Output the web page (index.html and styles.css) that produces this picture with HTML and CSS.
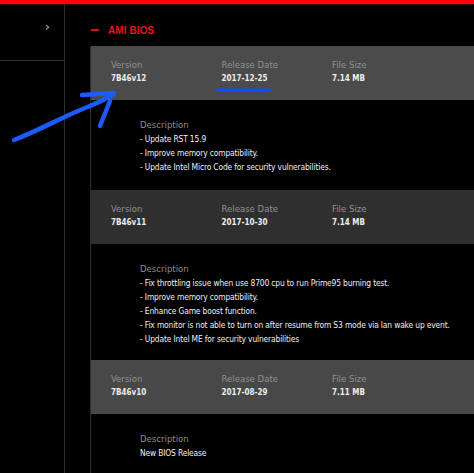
FILE: index.html
```html
<!DOCTYPE html>
<html>
<head>
<meta charset="utf-8">
<link rel="stylesheet" href="styles.css">
</head>
<body>
<div class="topbar"></div>
<div class="page">
  <aside class="sidebar">
    <div class="side-head"><span class="chev">&#8250;</span></div>
  </aside>
  <main class="content">
    <h2 class="section-title"><span class="dash"></span>AMI BIOS</h2>
    <div class="list">
      <div class="row row-light">
        <div class="cell"><div class="label">Version</div><div class="value">7B46v12</div></div>
        <div class="cell"><div class="label">Release Date</div><div class="value">2017-12-25</div></div>
        <div class="cell"><div class="label">File Size</div><div class="value">7.14 MB</div></div>
      </div>
      <div class="desc">
        <div class="desc-label">Description</div>
        <div class="desc-line">- Update RST 15.9</div>
        <div class="desc-line">- Improve memory compatibility.</div>
        <div class="desc-line">- Update Intel Micro Code for security vulnerabilities.</div>
      </div>
      <div class="row row-dark">
        <div class="cell"><div class="label">Version</div><div class="value">7B46v11</div></div>
        <div class="cell"><div class="label">Release Date</div><div class="value">2017-10-30</div></div>
        <div class="cell"><div class="label">File Size</div><div class="value">7.14 MB</div></div>
      </div>
      <div class="desc">
        <div class="desc-label">Description</div>
        <div class="desc-line">- Fix throttling issue when use 8700 cpu to run Prime95 burning test.</div>
        <div class="desc-line">- Improve memory compatibility.</div>
        <div class="desc-line">- Enhance Game boost function.</div>
        <div class="desc-line">- Fix monitor is not able to turn on after resume from S3 mode via lan wake up event.</div>
        <div class="desc-line">- Update Intel ME for security vulnerabilities</div>
      </div>
      <div class="row row-light2">
        <div class="cell"><div class="label">Version</div><div class="value">7B46v10</div></div>
        <div class="cell"><div class="label">Release Date</div><div class="value">2017-08-29</div></div>
        <div class="cell"><div class="label">File Size</div><div class="value">7.11 MB</div></div>
      </div>
      <div class="desc">
        <div class="desc-label">Description</div>
        <div class="desc-line">New BIOS Release</div>
      </div>
    </div>
  </main>
</div>
<svg class="annot" width="474" height="473" viewBox="0 0 474 473">
  <path d="M14 140 C 40 130, 60 118, 85 108 S 105 98, 113 95" fill="none" stroke="#1c5bff" stroke-width="4.5" stroke-linecap="round"/>
  <path d="M82 95 L 114 93" fill="none" stroke="#1c5bff" stroke-width="4.5" stroke-linecap="round"/>
  <path d="M110 101 L 100 126" fill="none" stroke="#1c5bff" stroke-width="4.5" stroke-linecap="round"/>
  <path d="M218 90 L 269 90" fill="none" stroke="#0d4dff" stroke-width="3" stroke-linecap="round"/>
</svg>
</body>
</html>
```
FILE: styles.css
```css
html, body {
  margin: 0;
  padding: 0;
  background: #000;
  width: 474px;
  height: 473px;
  overflow: hidden;
  font-family: "DejaVu Sans Condensed", "Liberation Sans", sans-serif;
}
.topbar {
  height: 4px;
  background: #ff0505;
  box-shadow: 0 0 2px #ff0000;
}
.page {
  display: flex;
  height: 469px;
}
.sidebar {
  width: 64px;
  border-right: 1px solid #2e2e2e;
  flex: none;
}
.side-head {
  height: 56px;
  border-bottom: 1px solid #2e2e2e;
  display: flex;
  justify-content: flex-end;
  align-items: flex-start;
  padding-right: 14px;
}
.chev {
  color: #b0b0b0;
  font-family: "DejaVu Sans", sans-serif;
  font-size: 13px;
  line-height: 13px;
  margin-top: 16px;
}
.content {
  flex: 1;
  margin-left: 25px;
}
.section-title {
  margin: 0;
  height: 42px;
  display: flex;
  align-items: center;
  padding-top: 10px;
  box-sizing: border-box;
  color: #e8141e;
  font-size: 10px;
  font-weight: bold;
  letter-spacing: 0.1px;
  font-family: "Liberation Sans", sans-serif;
}
.dash {
  display: inline-block;
  width: 8px;
  height: 2px;
  background: #c8141c;
  margin-left: 1px;
  margin-right: 9px;
}
.list {
  border-left: 1px solid #2e2e2e;
}
.row {
  display: flex;
  padding: 12px 0 14px 20px;
}
.row-light { background: #4b4b4b; }
.row-dark { background: #2f2f2f; margin-top: 2px; }
.row-light2 { background: #484848; }
.cell {
  width: 110.5px;
}
.label {
  color: #8f8f8f;
  font-size: 9.5px;
  line-height: 14px;
}
.value {
  color: #ececec;
  font-size: 8px;
  font-weight: bold;
  line-height: 14px;
}
.desc {
  padding: 18px 0 14px 49px;
  line-height: 14px;
}
.desc-label {
  color: #8c8c8c;
  font-size: 9.5px;
}
.desc-line {
  color: #f0f0f0;
  font-size: 8.4px;
  letter-spacing: -0.15px;
  white-space: nowrap;
}
.annot {
  position: absolute;
  left: 0;
  top: 0;
  pointer-events: none;
}
```
